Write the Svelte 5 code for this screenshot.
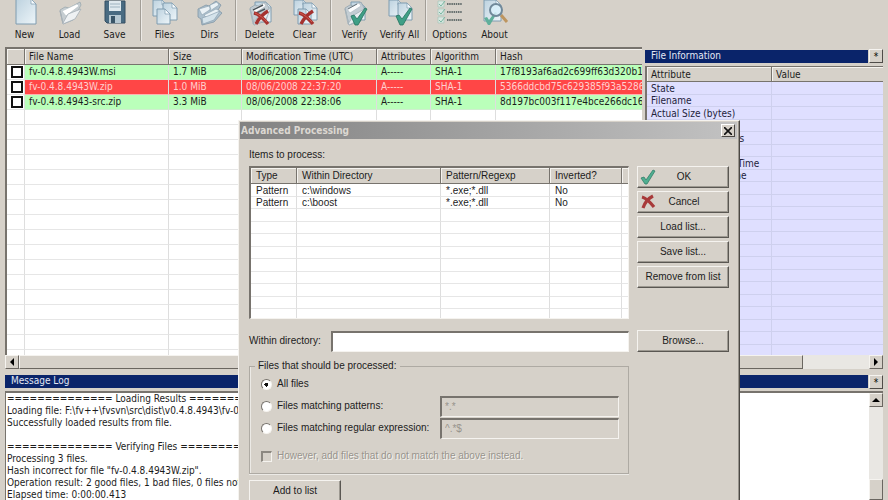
<script lang="ts">
  type FileRow = {
    name: string
    size: string
    modified: string
    algorithm: string
    hash: string
    bad?: boolean
  }

  const toolGroups = [
    ['New', 'Load', 'Save'],
    ['Files', 'Dirs'],
    ['Delete', 'Clear'],
    ['Verify', 'Verify All'],
    ['Options', 'About']
  ]

  const files: FileRow[] = [
    { name: 'fv-0.4.8.4943W.msi', size: '1.7 MiB', modified: '08/06/2008 22:54:04', algorithm: 'SHA-1', hash: '17f8193af6ad2c699ff63d320b16' },
    { name: 'fv-0.4.8.4943W.zip', size: '1.0 MiB', modified: '08/06/2008 22:37:20', algorithm: 'SHA-1', hash: '5366ddcbd75c629385f93a52862', bad: true },
    { name: 'fv-0.4.8.4943-src.zip', size: '3.3 MiB', modified: '08/06/2008 22:38:06', algorithm: 'SHA-1', hash: '8d197bc003f117e4bce266dc164' }
  ]

  const attributes = [
    'State',
    'Filename',
    'Actual Size (bytes)',
    'Stored Size (bytes)',
    'Actual File Attributes',
    'Stored Attributes',
    'Recorded Modified Time',
    'Stored Modified Time'
  ]

  const log = [
    '============== Loading Results ==============',
    'Loading file: F:\\fv++\\fvsvn\\src\\dist\\v0.4.8.4943\\fv-0.4.8.4943.fva',
    'Successfully loaded results from file.',
    '',
    '============== Verifying Files ==============',
    'Processing 3 files.',
    'Hash incorrect for file "fv-0.4.8.4943W.zip".',
    'Operation result: 2 good files, 1 bad files, 0 files not processed.',
    'Elapsed time: 0:00:00.413'
  ]

  const items = [
    { dir: 'c:\\windows', pattern: '*.exe;*.dll' },
    { dir: 'c:\\boost', pattern: '*.exe;*.dll' }
  ]

  let mode = $state('all')
  let directory = $state('')
</script>

{#snippet page(x: number, y: number, w: number, h: number)}
  <path
    d="M{x} {y}h{w - 5}l5 5v{h - 5}h{-w}z"
    fill="url(#paper)"
    stroke="#7f9cb0"
  />
  <path d="M{x + w - 5} {y}v5h5z" fill="#f6fbfe" stroke="#7f9cb0" stroke-width="0.7" />
{/snippet}

{#snippet folder()}
  <path d="M4 8l5-3 3 1 8-4 3 6-3 13-12 4z" fill="#c3cdd3" stroke="#94a4ae" stroke-width="0.8" />
  <path d="M6 9l12-6 2 3-11 7z" fill="#fbfcfd" stroke="#aab6bd" stroke-width="0.6" />
  <path d="M4 9l3 15 6-9 12-7-5 11-12 6z" fill="#e9eef1" stroke="#a2b0b8" stroke-width="0.8" />
{/snippet}

{#snippet cross()}
  <path d="M8 13c5 1 9 5 14 11M22 11c-5 3-9 7-12 13" fill="none" stroke="#a5322f" stroke-width="3.4" />
  <path d="M9 13c5 2 8 5 12 9" fill="none" stroke="#d15a4f" stroke-width="1" />
{/snippet}

{#snippet tick()}
  <path d="M10 16l3-1 3 4 8-11 2 1-9 16h-3z" fill="#3f9f86" stroke="#24745f" stroke-width="0.8" />
{/snippet}

{#snippet toolIcon(name: string)}
  <svg class="tool-icon" viewBox="0 0 28 26" aria-hidden="true">
    {#if name === 'New'}
      {@render page(5, -1, 20, 25)}
    {:else if name === 'Load'}
      <path d="M4 10l5-3 4 1 11-6 1 3-8 15-10 4z" fill="#c6cdd1" stroke="#9ba8af" stroke-width="0.8" />
      <path d="M6 11l15-7 2 2-13 10z" fill="#fff" stroke="#b4bfc5" stroke-width="0.6" />
      <path d="M4 11l3 12 5-9 13-5-6 10-12 5z" fill="#eef1f3" stroke="#a4afb6" stroke-width="0.8" />
    {:else if name === 'Save'}
      <path d="M4 1h20v22H6l-2-2z" fill="#496b82" stroke="#344f62" />
      <path d="M8 1h12v10H8z" fill="#dfe9ee" />
      <path d="M9 4h10M9 7h10" stroke="#9eb3c0" />
      <path d="M8 15h12v8H8z" fill="#b6c8d2" />
      <path d="M10 16h4v7h-4z" fill="#3a5568" />
    {:else if name === 'Files'}
      {@render page(2, 0, 14, 16)}
      {@render page(12, 3, 14, 17)}
      {@render page(6, 9, 13, 15)}
    {:else if name === 'Dirs'}
      <path d="M2 9l8-4 3 1 7-5 5 4-3 5 4 3-8 9-12 3-1-6-3-2z" fill="#adc0cd" stroke="#8197a6" stroke-width="0.8" />
      <path d="M3 9l10-3 2 3-9 6zM14 5l7-3 2 3-9 6zM8 15l12-6 4 2-12 8z" fill="#eaf1f5" stroke="#91a6b4" stroke-width="0.7" />
      <path d="M6 18l6-2 12-5-6 9-11 4z" fill="#d5e3eb" stroke="#8ca2b1" stroke-width="0.7" />
    {:else if name === 'Delete'}
      {@render page(9, 2, 16, 20)}
      {@render folder()}
      <path d="M7 10l10-5M8 14l11-5" stroke="#4c555a" stroke-width="1.5" />
      {@render cross()}
    {:else if name === 'Clear'}
      {@render page(3, 0, 14, 15)}
      {@render page(12, 3, 14, 17)}
      {@render page(7, 9, 13, 15)}
      {@render cross()}
    {:else if name === 'Verify'}
      {@render page(10, 2, 14, 18)}
      {@render folder()}
      <path d="M7 9l9-5" stroke="#66737b" />
      {@render tick()}
    {:else if name === 'Verify All'}
      {@render page(3, 0, 14, 16)}
      {@render page(12, 3, 14, 17)}
      {@render tick()}
    {:else if name === 'Options'}
      {#each [1, 9, 17] as y}
        <path d="M2 {y}h6v6h-6z" fill="#d9e8e2" stroke="#a7c5b9" stroke-width="0.7" />
        <path d="M3 {y + 3}l2 2 4-5" fill="none" stroke="#7ab8a3" />
        <path d="M11 {y + 3}h15" stroke="#67706f" stroke-width="2" stroke-dasharray="1.5 0.7" />
      {/each}
    {:else}
      {@render page(3, 0, 17, 21)}
      <path d="M3 18l3-1 2 3 6-8 2 1-7 12H7z" fill="#60af9b" />
      <path d="M20 15l6 7" stroke="#bd955f" stroke-width="3" />
      <circle cx="15" cy="10" r="6" fill="#d9f0fa" fill-opacity="0.85" stroke="#71899a" stroke-width="2" />
    {/if}
  </svg>
{/snippet}

<svg class="defs" aria-hidden="true">
  <linearGradient id="paper" x1="0" y1="0" x2="1" y2="1">
    <stop offset="0" stop-color="#bdd2df" />
    <stop offset="1" stop-color="#edf5f9" />
  </linearGradient>
</svg>

<div class="app">
  <div class="toolbar" role="toolbar">
    {#each toolGroups as group}
      <div class="group">
        {#each group as name}
          <button class="tool">
            {@render toolIcon(name)}
            <span>{name}</span>
          </button>
        {/each}
      </div>
    {/each}
  </div>

  <main class="panes">
    <section class="file-list">
      <div class="table-wrap">
        <table class="files">
          <colgroup>
            <col class="c-check" /><col class="c-name" /><col class="c-size" /><col class="c-time" />
            <col class="c-attr" /><col class="c-algo" /><col />
          </colgroup>
          <thead>
            <tr>
              <th aria-label="Selected"></th><th>File Name</th><th>Size</th><th>Modification Time (UTC)</th>
              <th>Attributes</th><th>Algorithm</th><th>Hash</th>
            </tr>
          </thead>
          <tbody>
            {#each files as file}
              <tr class="good" class:bad={file.bad}>
                <td><input type="checkbox" class="row-check" aria-label={file.name} /></td>
                <td>{file.name}</td>
                <td>{file.size}</td>
                <td>{file.modified}</td>
                <td>A-----</td>
                <td>{file.algorithm}</td>
                <td>{file.hash}</td>
              </tr>
            {/each}
            {#each Array(17) as _}
              <tr><td></td><td></td><td></td><td></td><td></td><td></td><td></td></tr>
            {/each}
          </tbody>
        </table>
      </div>
      <div class="scroll-x">
        <button class="arrow" aria-label="Scroll left"><svg viewBox="0 0 8 8"><path d="M6 0v8L2 4z" /></svg></button>
        <div class="thumb full"></div>
      </div>
    </section>

    <section class="info">
      <header class="pane-title">
        <h2>File Information</h2>
        <button class="pin" aria-label="Pin file information">*</button>
      </header>
      <div class="table-wrap lilac">
        <table class="attrs">
          <colgroup><col class="c-attribute" /><col /></colgroup>
          <thead>
            <tr><th>Attribute</th><th>Value</th></tr>
          </thead>
          <tbody>
            {#each attributes as attribute}
              <tr><td>{attribute}</td><td></td></tr>
            {/each}
            {#each Array(14) as _}
              <tr><td></td><td></td></tr>
            {/each}
          </tbody>
        </table>
      </div>
      <div class="scroll-x">
        <div class="thumb"></div>
        <div class="track"></div>
        <button class="arrow" aria-label="Scroll right"><svg viewBox="0 0 8 8"><path d="M2 0v8l4-4z" /></svg></button>
      </div>
    </section>
  </main>

  <section class="log">
    <header class="pane-title">
      <h2>Message Log</h2>
      <button class="pin" aria-label="Pin message log">*</button>
    </header>
    <div class="log-body">
      <pre>{log.join('\n')}</pre>
      <div class="scroll-y">
        <button class="arrow" aria-label="Scroll up"><svg viewBox="0 0 8 8"><path d="M0 6h8L4 2z" /></svg></button>
        <div class="track"></div>
        <div class="thumb"></div>
      </div>
    </div>
  </section>

  <div class="dialog" role="dialog" aria-labelledby="dialog-title">
    <header class="dialog-title">
      <h1 id="dialog-title">Advanced Processing</h1>
      <button class="close" aria-label="Close">
        <svg viewBox="0 0 8 8"><path d="M0 0l8 8M8 0L0 8" /></svg>
      </button>
    </header>

    <div class="dialog-body">
      <p class="caption">Items to process:</p>
      <div class="columns">
        <div class="table-wrap items-wrap">
          <table class="items">
            <colgroup>
              <col class="c-type" /><col class="c-dir" /><col class="c-pattern" /><col class="c-inverted" /><col />
            </colgroup>
            <thead>
              <tr><th>Type</th><th>Within Directory</th><th>Pattern/Regexp</th><th>Inverted?</th><th aria-label="Blank"></th></tr>
            </thead>
            <tbody>
              {#each items as item}
                <tr><td>Pattern</td><td>{item.dir}</td><td>{item.pattern}</td><td>No</td><td></td></tr>
              {/each}
              {#each Array(9) as _}
                <tr><td></td><td></td><td></td><td></td><td></td></tr>
              {/each}
            </tbody>
          </table>
        </div>

        <div class="actions">
          <button class="push iconed">
            <svg viewBox="0 0 16 16"><path d="M1 9l3-1 2 3 7-10 2 1-8 13H5z" fill="#4fae90" stroke="#347e69" stroke-width="0.8" /></svg>
            <span>OK</span>
          </button>
          <button class="push iconed">
            <svg viewBox="0 0 16 16"><path d="M2 3c4 1 8 5 12 10M13 2C9 4 5 8 3 14" fill="none" stroke="#a83a3a" stroke-width="3.2" /></svg>
            <span>Cancel</span>
          </button>
          <button class="push">Load list...</button>
          <button class="push">Save list...</button>
          <button class="push">Remove from list</button>
        </div>
      </div>

      <div class="columns directory">
        <div class="field">
          <label for="within">Within directory:</label>
          <input id="within" type="text" bind:value={directory} />
        </div>
        <button class="push">Browse...</button>
      </div>

      <fieldset>
        <legend>Files that should be processed:</legend>
        <div class="option">
          <input type="radio" id="all" value="all" bind:group={mode} />
          <label for="all">All files</label>
        </div>
        <div class="option">
          <input type="radio" id="patterns" value="patterns" bind:group={mode} />
          <label for="patterns">Files matching patterns:</label>
          <input type="text" value="*.*" aria-label="Patterns" disabled={mode !== 'patterns'} />
        </div>
        <div class="option">
          <input type="radio" id="regexp" value="regexp" bind:group={mode} />
          <label for="regexp">Files matching regular expression:</label>
          <input type="text" value="^.*$" aria-label="Regular expression" disabled={mode !== 'regexp'} />
        </div>
        <div class="option however">
          <input type="checkbox" id="however" disabled={mode === 'all'} />
          <label for="however">However, add files that do not match the above instead.</label>
        </div>
      </fieldset>

      <button class="push">Add to list</button>
    </div>
  </div>
</div>

<style>
  :global(body) {
    background: #d6d1c9;
  }

  .app {
    --face: #d6d1c9;
    --shadow: #77736d;
    --light: #f5f3ef;
    --navy: #0a246a;
    position: relative;
    display: flex;
    flex-direction: column;
    height: 100vh;
    overflow: hidden;
    background: var(--face);
    color: #1c1c1c;
    font-family: 'DejaVu Sans Condensed', 'DejaVu Sans', sans-serif;
    font-size: 10px;
    line-height: 12px;
  }

  .app * {
    box-sizing: border-box;
  }

  .defs {
    position: absolute;
    width: 0;
    height: 0;
  }

  button,
  input {
    font: inherit;
    color: inherit;
    margin: 0;
    padding: 0;
  }

  h1,
  h2,
  p,
  pre {
    margin: 0;
    font: inherit;
  }

  /* Toolbar */
  .toolbar {
    display: flex;
    flex: none;
    height: 47px;
    padding: 0 2px;
  }

  .group {
    display: flex;
    height: 41px;
  }

  .group + .group {
    margin-left: 3px;
    padding-left: 1px;
    border-left: 1px solid #a29e97;
    box-shadow: inset 1px 0 #eceae6;
  }

  .tool {
    display: flex;
    flex-direction: column;
    align-items: center;
    gap: 3px;
    width: 45px;
    border: 0;
    background: none;
    white-space: nowrap;
  }

  .tool-icon {
    width: 28px;
    height: 26px;
  }

  /* Tables */
  .table-wrap {
    flex: 1;
    min-height: 0;
    overflow: hidden;
    background: #fff;
    border-top: 2px solid var(--shadow);
    border-left: 2px solid var(--shadow);
  }

  table {
    width: 100%;
    table-layout: fixed;
    border-collapse: separate;
    border-spacing: 0;
  }

  th,
  td {
    padding: 0 4px;
    overflow: hidden;
    white-space: nowrap;
    text-align: left;
    font-weight: normal;
  }

  th {
    height: 16px;
    padding-top: 1px;
    background: var(--face);
    border-right: 1px solid var(--shadow);
    border-bottom: 1px solid var(--shadow);
    box-shadow: inset 1px 1px var(--light);
  }

  th:last-child,
  td:last-child {
    border-right: 0;
  }

  td {
    border-right: 1px solid #dedede;
    border-bottom: 1px solid #e6e6e6;
  }

  .panes {
    display: flex;
    flex: none;
    gap: 3px;
    height: 322px;
    padding: 0 5px;
  }

  .file-list {
    display: flex;
    flex: 1;
    flex-direction: column;
    min-width: 0;
  }

  .c-check { width: 18px; }
  .c-name { width: 144px; }
  .c-size { width: 73px; }
  .c-time { width: 135px; }
  .c-attr { width: 54px; }
  .c-algo { width: 65px; }

  .files td {
    height: 15px;
    padding: 0 4px;
    line-height: 14px;
  }

  .files td:first-child {
    padding: 0 0 0 4px;
  }

  .files td:last-child {
    padding-right: 0;
  }

  .good td:not(:first-child) {
    background: #baffba;
    border-bottom-color: #cfeecf;
  }

  .bad td:not(:first-child) {
    background: #ff4646;
    border-bottom-color: #ffb0b0;
    color: #ffd0d0;
  }

  .row-check {
    display: block;
    appearance: none;
    width: 12px;
    height: 12px;
    border: 2px solid #111;
    background: #fff;
  }

  .info {
    display: flex;
    flex: none;
    flex-direction: column;
    width: 238px;
  }

  .pane-title {
    display: flex;
    flex: none;
    gap: 1px;
    align-items: center;
    height: 15px;
    color: #e4e8f4;
  }

  .pane-title h2 {
    flex: 1;
    height: 13px;
    padding-left: 6px;
    background: var(--navy);
  }

  .info .pane-title {
    height: 19px;
    padding: 1px 0 2px;
  }

  .pin {
    width: 14px;
    height: 14px;
    border: 1px solid;
    border-color: var(--light) #4f4c48 #4f4c48 var(--light);
    background: var(--face);
    color: #000;
    line-height: 14px;
  }

  .c-attribute { width: 125px; }

  .lilac {
    background: #dfdfff;
    border-top-width: 1px;
  }

  .attrs th {
    height: 15px;
  }

  .attrs td {
    height: 13px;
    border-color: #ced0ee;
    color: #23233c;
    line-height: 11px;
  }

  .attrs tr:nth-child(even) td,
  .items tr:nth-child(even) td {
    height: 12px;
  }

  /* Scroll bars */
  .scroll-x,
  .scroll-y {
    display: flex;
    flex: none;
    background: #e9e7e3;
  }

  .scroll-x {
    height: 14px;
  }

  .scroll-y {
    flex-direction: column;
    width: 14px;
  }

  .arrow,
  .thumb {
    border: 1px solid;
    border-color: var(--light) #6a6660 #6a6660 var(--light);
    background: var(--face);
  }

  .arrow {
    display: flex;
    flex: none;
    align-items: center;
    justify-content: center;
    width: 14px;
    height: 14px;
  }

  .arrow svg {
    width: 8px;
    height: 8px;
  }

  .track {
    flex: 1;
  }

  .scroll-x .thumb {
    width: 158px;
  }

  .scroll-x .thumb.full {
    flex: 1;
    width: auto;
  }

  .scroll-y .thumb {
    height: 21px;
  }

  /* Message log */
  .log {
    display: flex;
    flex: 1;
    flex-direction: column;
    gap: 2px;
    min-height: 0;
    padding: 5px 5px 0;
  }

  .log-body {
    display: flex;
    flex: 1;
    min-height: 0;
    border-top: 2px solid var(--shadow);
    border-left: 1px solid var(--shadow);
    background: #fff;
  }

  .log pre {
    flex: 1;
    overflow: hidden;
    padding-left: 1px;
  }

  /* Dialog */
  .dialog {
    position: absolute;
    top: 120px;
    left: 238px;
    width: 502px;
    height: 400px;
    border: 1px solid;
    border-color: var(--light) #4b4844 #4b4844 var(--light);
    box-shadow: inset -1px 0 #98948d;
    background: var(--face);
    font-family: 'Liberation Sans', Arial, sans-serif;
  }

  .dialog-title {
    display: flex;
    align-items: center;
    justify-content: space-between;
    height: 17px;
    margin: 1px 2px 0 1px;
    padding: 0 2px 0 1px;
    background: linear-gradient(90deg, #828282, #c2c2c2);
    color: #dcd8d2;
    font-family: 'DejaVu Sans Condensed', 'DejaVu Sans', sans-serif;
    font-weight: bold;
  }

  .close {
    display: flex;
    align-items: center;
    justify-content: center;
    width: 14px;
    height: 13px;
    border: 1px solid;
    border-color: #fff #4b4844 #4b4844 #fff;
    background: var(--face);
  }

  .close svg {
    width: 8px;
    height: 8px;
    stroke: #111;
    stroke-width: 1.6;
  }

  .dialog-body {
    padding: 10px 10px 0;
  }

  .columns {
    display: grid;
    grid-template-columns: 1fr 92px;
    gap: 8px;
  }

  .caption {
    margin-bottom: 5px;
  }

  .items-wrap {
    height: 153px;
    border-right: 1px solid var(--light);
    border-bottom: 1px solid var(--light);
  }

  .c-type { width: 46px; }
  .c-dir { width: 144px; }
  .c-pattern { width: 109px; }
  .c-inverted { width: 72px; }

  .items td {
    height: 13px;
    line-height: 11px;
  }

  .items th,
  .items td {
    padding-right: 5px;
    padding-left: 5px;
  }

  .actions {
    display: flex;
    flex-direction: column;
    gap: 3px;
  }

  .push {
    width: 92px;
    height: 22px;
    border: 1px solid;
    border-color: var(--light) #5a5752 #5a5752 var(--light);
    box-shadow: inset -1px -1px #9d9991;
    background: var(--face);
    text-align: center;
  }

  .iconed {
    display: flex;
    align-items: center;
    padding-left: 2px;
  }

  .iconed svg {
    width: 16px;
    height: 16px;
  }

  .iconed span {
    flex: 1;
    padding-right: 16px;
  }

  .directory {
    margin-top: 11px;
  }

  .field {
    display: flex;
    align-items: center;
  }

  .field label {
    width: 82px;
  }

  input[type='text'] {
    flex: 1;
    min-width: 0;
    height: 21px;
    padding: 0 3px;
    border: 1px solid;
    border-width: 2px 1px 1px 2px;
    border-color: var(--shadow) var(--light) var(--light) var(--shadow);
    background: #fff;
  }

  input[type='text']:disabled {
    background: var(--face);
    color: #98948d;
  }

  fieldset {
    width: 380px;
    min-width: 0;
    margin: 8px 0 6px;
    padding: 1px 9px 0 11px;
    border: 1px solid #aeaaa3;
    box-shadow: inset 1px 0 #eceae6, 0 1px #eceae6;
  }

  legend {
    padding: 0 4px 0 3px;
    margin-left: -6px;
  }

  .option {
    display: flex;
    align-items: center;
    height: 22px;
  }

  .option label {
    width: 168px;
    padding-left: 5px;
    white-space: nowrap;
  }

  .option input[type='radio'] {
    appearance: none;
    width: 11px;
    height: 11px;
    border: 1px solid;
    border-color: #77736d #f5f3ef #f5f3ef #77736d;
    border-radius: 50%;
    background: #fff;
  }

  .option input[type='radio']:checked {
    background: radial-gradient(circle, #111 0 2px, #fff 2px);
  }

  .however {
    height: 34px;
    color: #98948d;
    text-shadow: 1px 1px #f5f3ef;
  }

  .option input[type='checkbox'] {
    appearance: none;
    width: 11px;
    height: 11px;
    border: 1px solid;
    border-width: 2px 1px 1px 2px;
    border-color: #8c8881 #f5f3ef #f5f3ef #8c8881;
  }
</style>
